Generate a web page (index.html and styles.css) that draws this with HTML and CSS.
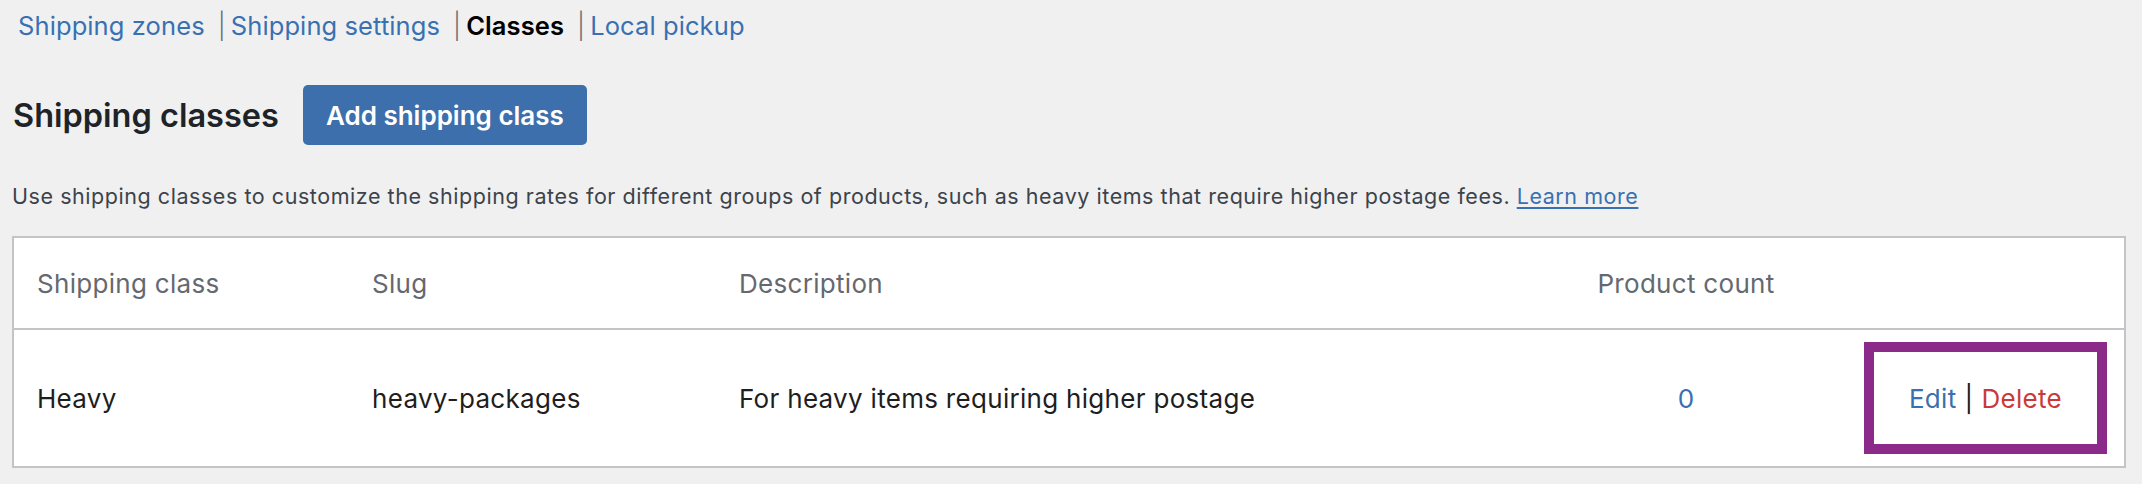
FILE: index.html
```html
<!DOCTYPE html>
<html lang="en">
<head>
<meta charset="UTF-8">
<meta name="viewport" content="width=device-width, initial-scale=1.0">
<title>Shipping classes</title>
<link rel="stylesheet" href="styles.css">
</head>
<body>
  <ul class="subnav">
    <li><a href="#">Shipping zones</a></li>
    <li><span class="sep">|</span><a href="#">Shipping settings</a></li>
    <li><span class="sep">|</span><span class="current">Classes</span></li>
    <li><span class="sep">|</span><a href="#">Local pickup</a></li>
  </ul>

  <div class="page-head">
    <h2>Shipping classes</h2>
    <button class="btn-primary">Add shipping class</button>
  </div>

  <p class="intro">Use shipping classes to customize the shipping rates for different groups of products, such as heavy items that require higher postage fees. <a href="#">Learn more</a></p>

  <div class="classes-table">
    <div class="row head">
      <div class="cell">Shipping class</div>
      <div class="cell">Slug</div>
      <div class="cell">Description</div>
      <div class="cell count">Product count</div>
      <div class="cell"></div>
    </div>
    <div class="row">
      <div class="cell">Heavy</div>
      <div class="cell">heavy-packages</div>
      <div class="cell">For heavy items requiring higher postage</div>
      <div class="cell count"><a href="#">0</a></div>
      <div class="cell actions">
        <div class="highlight">
          <a href="#">Edit</a><span class="bar">|</span><a href="#" class="delete">Delete</a>
        </div>
      </div>
    </div>
  </div>
</body>
</html>
```

FILE: styles.css
```css
body {
  margin: 0;
  padding: 0 16px 0 12px;
  background-color: #f0f0f1;
  font-family: Inter, "Noto Sans", sans-serif;
  color: #1e1e1e;
}
a {
  color: #3870b2;
  text-decoration: none;
}
.subnav {
  list-style: none;
  margin: 0;
  padding: 9px 0 0 6px;
  display: flex;
  font-size: 25.5px;
  line-height: 34px;
  letter-spacing: 0.1px;
}
.subnav .sep {
  color: #6c7075;
  font-weight: 300;
  margin: 0 5px 0 13px;
}
.subnav .current {
  color: #000;
  font-weight: 600;
}
.page-head {
  display: flex;
  align-items: center;
  gap: 24px;
  margin-top: 42px;
}
.page-head h2 {
  margin: 0;
  font-size: 32.5px;
  font-weight: 600;
  color: #1d2327;
  padding-left: 1px;
}
.btn-primary {
  font-family: inherit;
  font-size: 26px;
  font-weight: 600;
  color: #fff;
  background-color: #3c6fab;
  border: none;
  border-radius: 5px;
  height: 60px;
  padding: 0 23px;
}
.intro {
  margin: 36px 0 0;
  font-size: 21.5px;
  line-height: 30px;
  letter-spacing: 0.55px;
  color: #3c434a;
}
.intro a {
  text-decoration: underline;
  text-underline-offset: 3px;
}
.classes-table {
  margin-top: 25px;
  background-color: #fff;
  border: 2px solid #c3c4c7;
}
.row {
  display: grid;
  grid-template-columns: 335px 367px 1fr 264px 306px;
  align-items: center;
  height: 136px;
  font-size: 26px;
  letter-spacing: 0.3px;
}
.row.head {
  height: 90px;
  border-bottom: 2px solid #c3c4c7;
  color: #646970;
}
.cell {
  padding-left: 23px;
}
.cell.count {
  padding-left: 0;
  text-align: center;
}
.cell.actions {
  display: flex;
  justify-content: flex-end;
  padding: 0 17px 0 0;
}
.highlight {
  display: flex;
  align-items: center;
  justify-content: center;
  width: 223px;
  height: 92px;
  border: 10px solid #8b2a89;
}
.bar {
  color: #1e1e1e;
  margin: 0 8px;
}
.delete {
  color: #c93a3a;
}
```
